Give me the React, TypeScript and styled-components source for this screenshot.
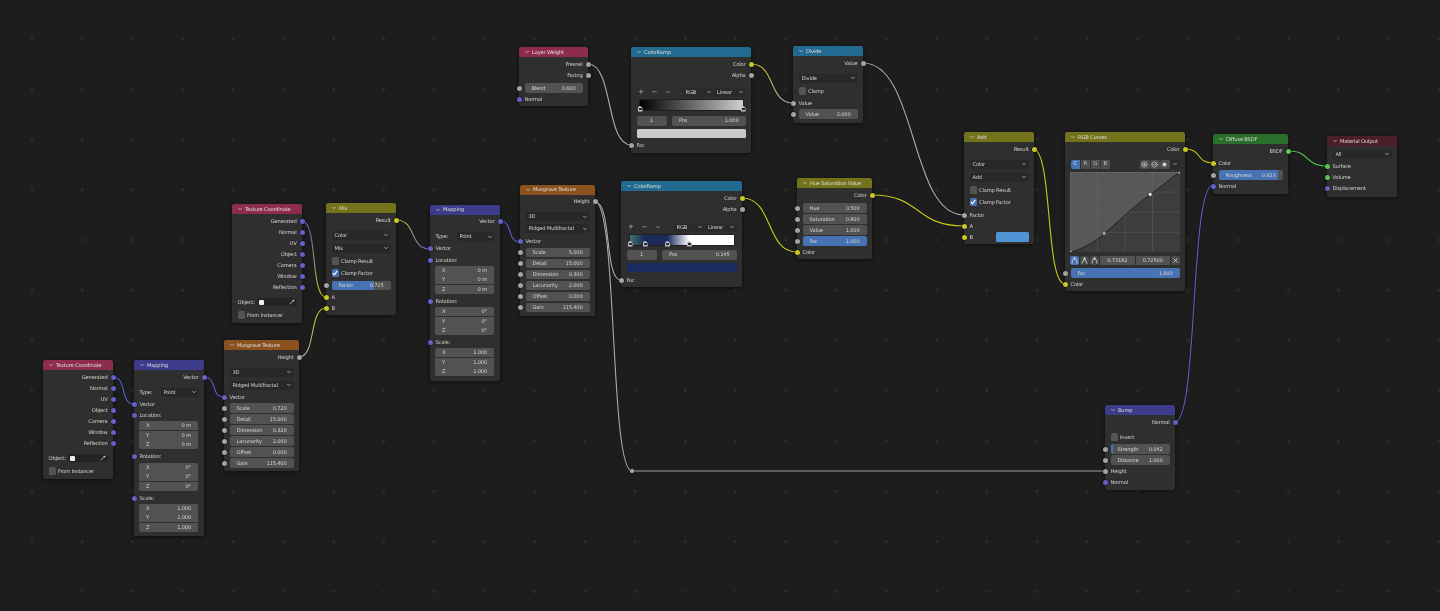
import React from "react";
import styled, { createGlobalStyle } from "styled-components";

type Kind = "gray" | "yellow" | "purple" | "green";
const KIND: Record<Kind, string> = { gray: "#a4a4a4", yellow: "#c7c729", purple: "#6363c7", green: "#5cc45c" };
const WIRE: Record<Kind, string> = { gray: "#a6a6a6", yellow: "#c4c420", purple: "#5c5cc0", green: "#50b450" };

const HEAD = { input: "#8e2c4f", vector: "#3c3c8a", texture: "#8b5220", color: "#73731c", converter: "#226a90", shader: "#2b6e2b", output: "#4b1e2a" };

const Global = createGlobalStyle`
  *, *::before, *::after { box-sizing: border-box; }
  html, body { margin: 0; padding: 0; background: #1d1d1d; }
  body { font-family: "DejaVu Sans", "Liberation Sans", sans-serif; text-rendering: geometricPrecision; }
`;

const Canvas = styled.main`
  position: relative;
  width: 1440px;
  height: 611px;
  overflow: hidden;
  background-color: #1d1d1d;
  background-image: radial-gradient(circle at center, #2e2e2e 0, #2e2e2e 1px, transparent 1.6px);
  background-size: 50.25px 50.25px;
  background-position: 6.9px 13.9px;
  filter: blur(0.4px);
`;

const WireLayer = styled.svg`
  position: absolute;
  inset: 0;
  width: 1440px;
  height: 611px;
`;

const NodeBox = styled.section<{ $x: number; $y: number; $w: number; $h: number }>`
  position: absolute;
  left: ${(p) => p.$x}px;
  top: ${(p) => p.$y}px;
  width: ${(p) => p.$w}px;
  height: ${(p) => p.$h}px;
  background: #2f2f2f;
  border-radius: 2.5px;
  box-shadow: 0 1px 4px rgba(0, 0, 0, 0.55);
  display: flex;
  flex-direction: column;
  font-size: 5.2px;
  letter-spacing: -0.2px;
  color: #d2d2d2;
`;

const Header = styled.header<{ $color: string }>`
  flex: none;
  height: 10px;
  margin-bottom: 1.5px;
  display: flex;
  align-items: center;
  gap: 3.5px;
  padding-left: 5.5px;
  background: ${(p) => p.$color};
  border-radius: 2.5px 2.5px 0 0;
  color: #dcdcdc;
  white-space: nowrap;
`;

const Label = styled.span`
  padding-top: 1.2px;
`;

const Row = styled.div<{ $mt?: number; $end?: boolean }>`
  position: relative;
  flex: none;
  height: 11px;
  margin-top: ${(p) => p.$mt ?? 0}px;
  padding: 0 5.5px;
  display: flex;
  align-items: center;
  justify-content: ${(p) => (p.$end ? "flex-end" : "flex-start")};
  white-space: nowrap;
`;

const Socket = styled.i<{ $kind: Kind; $right?: boolean }>`
  position: absolute;
  top: 3px;
  ${(p) => (p.$right ? "right: -2.5px;" : "left: -2.5px;")}
  width: 5px;
  height: 5px;
  border-radius: 50%;
  background: ${(p) => KIND[p.$kind]};
  box-shadow: 0 0 0 0.4px rgba(0, 0, 0, 0.6);
`;

const Field = styled.div<{ $fill?: number }>`
  flex: 1;
  height: 9.5px;
  padding: 0 7px;
  display: flex;
  align-items: center;
  justify-content: space-between;
  border-radius: 2px;
  background: ${(p) =>
    p.$fill
      ? `linear-gradient(to right, #4772b3 ${p.$fill}%, #525252 ${p.$fill}%)`
      : "#525252"};
  & > span { padding-top: 1.2px; }
`;

const Stack = styled.div`
  flex: none;
  margin: 0.25px 6px 0 5px;
  display: flex;
  flex-direction: column;
  gap: 0.5px;
`;

const StackField = styled(Field)`
  flex: none;
  height: 9px;
  border-radius: 0;
  &:first-child { border-radius: 2px 2px 0 0; }
  &:last-child { border-radius: 0 0 2px 2px; }
`;

const Drop = styled.div<{ $w?: number }>`
  flex: ${(p) => (p.$w ? "none" : "1")};
  width: ${(p) => (p.$w ? `${p.$w}px` : "auto")};
  height: 9px;
  padding: 0 2.5px 0 3px;
  display: flex;
  align-items: center;
  justify-content: space-between;
  background: #282828;
  border-radius: 2px;
  & > span { padding-top: 1.2px; }
`;

const TypeLabel = styled.span`
  flex: 1;
  padding-top: 1.2px;
`;

const Box = styled.span<{ $on?: boolean }>`
  flex: none;
  width: 7.5px;
  height: 7.5px;
  margin-right: 2px;
  border-radius: 1.5px;
  background: ${(p) => (p.$on ? "#4772b3" : "#545454")};
  display: flex;
  align-items: center;
  justify-content: center;
`;

const ObjectBox = styled.div`
  flex: 1;
  height: 8.5px;
  margin-left: 2.5px;
  padding: 0 2px;
  display: flex;
  align-items: center;
  justify-content: space-between;
  border-radius: 2px;
  background: #232323;
`;

const ObjectDot = styled.span`
  width: 5px;
  height: 5px;
  border-radius: 1px;
  background: #eee;
`;

const Swatch = styled.div<{ $color: string }>`
  flex: 1;
  height: 100%;
  background: ${(p) => p.$color};
  border-radius: 1.5px;
`;

const SwatchRow = styled.div<{ $mt?: number }>`
  flex: none;
  height: 9.5px;
  margin: ${(p) => p.$mt ?? 0}px 5.5px 0;
  display: flex;
`;

const RampBar = styled.div<{ $mt: number; $gradient: string }>`
  position: relative;
  flex: none;
  height: 9.5px;
  margin: ${(p) => p.$mt}px 8px 0 9px;
  background: ${(p) => p.$gradient};
  box-shadow: 0 0 0 0.5px #111;
`;

const Pin = styled.span<{ $at: number }>`
  position: absolute;
  bottom: -2px;
  left: calc(${(p) => p.$at}% - 2.5px);
  width: 5px;
  height: 6px;
  background: #c0c0c0;
  clip-path: polygon(50% 0, 100% 40%, 100% 100%, 0 100%, 0 40%);
  &::after {
    content: "";
    position: absolute;
    left: 1px;
    top: 2.4px;
    width: 3px;
    height: 2.6px;
    background: #2a2a2a;
  }
`;

const ToolRow = styled(Row)`
  padding: 0 5.5px 0 3px;
  gap: 0;
`;

const ToolIcon = styled.span`
  flex: none;
  width: 13.5px;
  display: flex;
  justify-content: center;
  color: #b8b8b8;
  font-size: 7px;
`;

const ToolGap = styled.span`
  flex: 1;
`;

const RampDrop = styled(Drop)`
  background: #2a2a2a;
  margin-left: 0.5px;
  padding-left: 3.5px;
`;

const PairRow = styled(Row)`
  gap: 5.5px;
  height: 9.5px;
`;

const IndexField = styled(Field)`
  flex: none;
  width: 30px;
  justify-content: center;
`;

const Tabs = styled.div`
  display: flex;
  gap: 0.5px;
`;

const Tab = styled.span<{ $on?: boolean }>`
  width: 9.5px;
  height: 9px;
  padding-top: 0.8px;
  display: flex;
  align-items: center;
  justify-content: center;
  background: ${(p) => (p.$on ? "#4772b3" : "#4e4e4e")};
  border-radius: ${(p) => (p.$on ? "2px 0 0 2px" : "0")};
  color: ${(p) => (p.$on ? "#eee" : "#c4c4c4")};
`;

const CurveIcons = styled.div`
  margin-left: auto;
  display: flex;
  align-items: center;
  gap: 0;
`;

const CurveIcon = styled.span<{ $dark?: boolean }>`
  width: 10px;
  height: 9px;
  display: flex;
  align-items: center;
  justify-content: center;
  background: ${(p) => (p.$dark ? "#2a2a2a" : "#4e4e4e")};
  border-radius: 2px;
  color: #d0d0d0;
`;

const Graph = styled.svg`
  flex: none;
  display: block;
  width: 110px;
  height: 80.5px;
  margin: 2.25px 5px 0;
`;

const CurveTools = styled(Row)`
  margin-top: 2.25px;
  padding: 0 5px;
  gap: 1px;
`;

const ToolBtn = styled.span<{ $on?: boolean }>`
  flex: none;
  width: 9px;
  height: 9px;
  display: flex;
  align-items: center;
  justify-content: center;
  border-radius: 2px;
  background: ${(p) => (p.$on ? "#4772b3" : "#4a4a4a")};
  color: #ddd;
`;

const CoordField = styled(Field)`
  flex: none;
  width: 34.5px;
  height: 9px;
  padding: 0;
  justify-content: center;
  border-radius: 0;
`;

const CloseBtn = styled(ToolBtn)`
  margin-left: auto;
`;

const SwatchBox = styled.span<{ $color: string }>`
  display: block;
  width: 33px;
  height: 9.5px;
  border-radius: 1.5px;
  background: ${(p) => p.$color};
`;

const Chevron = ({ s = 4 }: { s?: number }) => (
  <svg width={s} height={s} viewBox="0 0 8 8" fill="none" stroke="currentColor" strokeWidth="1.3" strokeLinecap="round" strokeLinejoin="round">
    <path d="M1 2.5 L4 5.5 L7 2.5" />
  </svg>
);

const Node = ({ title, color, x, y, w, h, children }: { title: string; color: string; x: number; y: number; w: number; h: number; children?: React.ReactNode }) => (
  <NodeBox $x={x} $y={y} $w={w} $h={h}>
    <Header $color={color}><Chevron /><Label>{title}</Label></Header>
    {children}
  </NodeBox>
);

const Out = ({ label, kind, mt }: { label: string; kind: Kind; mt?: number }) => (
  <Row $end $mt={mt}><Label>{label}</Label><Socket $kind={kind} $right /></Row>
);

const In = ({ label, kind, mt }: { label: string; kind: Kind; mt?: number }) => (
  <Row $mt={mt}><Socket $kind={kind} /><Label>{label}</Label></Row>
);

const Num = ({ label, value, mt, fill, socket = "gray" }: { label: string; value: string; mt?: number; fill?: number; socket?: Kind | null }) => (
  <Row $mt={mt}>
    {socket && <Socket $kind={socket} />}
    <Field $fill={fill}><span>{label}</span><span>{value}</span></Field>
  </Row>
);

const Pick = ({ label, mt }: { label: string; mt?: number }) => (
  <Row $mt={mt}><Drop><span>{label}</span><Chevron /></Drop></Row>
);

const Check = ({ label, on, mt }: { label: string; on?: boolean; mt?: number }) => (
  <Row $mt={mt}>
    <Box $on={on}>
      {on && (
        <svg width="6" height="6" viewBox="0 0 8 8" fill="none" stroke="#fff" strokeWidth="1.6" strokeLinecap="round" strokeLinejoin="round">
          <path d="M1.5 4.5 L3.3 6.3 L6.5 1.8" />
        </svg>
      )}
    </Box>
    <Label>{label}</Label>
  </Row>
);

const Vec = ({ values }: { values: string[] }) => (
  <Stack>
    {["X", "Y", "Z"].map((a, i) => (
      <StackField key={a}><span>{a}</span><span>{values[i]}</span></StackField>
    ))}
  </Stack>
);

const Pipette = () => (
  <svg width="6" height="6" viewBox="0 0 12 12" fill="#cfcfcf" stroke="#cfcfcf" strokeWidth="1">
    <path d="M9 1.5 L10.5 3 L8.5 5 L7 3.5 Z" />
    <path d="M7 4.5 L2 9.5 L1.5 10.5 L2.5 10 L7.5 5" fill="none" />
  </svg>
);

const TexCoord = ({ x, y }: { x: number; y: number }) => (
  <Node title="Texture Coordinate" color={HEAD.input} x={x} y={y} w={70} h={119}>
    {["Generated", "Normal", "UV", "Object", "Camera", "Window", "Reflection"].map((l) => (
      <Out key={l} label={l} kind="purple" />
    ))}
    <Row $mt={4}><Label>Object:</Label><ObjectBox><ObjectDot /><Pipette /></ObjectBox></Row>
    <Check label="From Instancer" mt={2} />
  </Node>
);

const Mapping = ({ x, y }: { x: number; y: number }) => (
  <Node title="Mapping" color={HEAD.vector} x={x} y={y} w={70} h={176}>
    <Out label="Vector" kind="purple" />
    <Row $mt={4}>
      <TypeLabel>Type:</TypeLabel>
      <Drop $w={38}><span>Point</span><Chevron /></Drop>
    </Row>
    <In label="Vector" kind="purple" mt={1} />
    <In label="Location:" kind="purple" mt={0.5} />
    <Vec values={["0 m", "0 m", "0 m"]} />
    <In label="Rotation:" kind="purple" mt={2} />
    <Vec values={["0°", "0°", "0°"]} />
    <In label="Scale:" kind="purple" mt={2} />
    <Vec values={["1.000", "1.000", "1.000"]} />
  </Node>
);

const Musgrave = ({ x, y, h, vals, m2, m3 }: { x: number; y: number; h: number; vals: string[]; m2: number; m3: number }) => (
  <Node title="Musgrave Texture" color={HEAD.texture} x={x} y={y} w={75} h={h}>
    <Out label="Height" kind="gray" />
    <Pick label="3D" mt={4} />
    <Pick label="Ridged Multifractal" mt={m2} />
    <In label="Vector" kind="purple" mt={m3} />
    {["Scale", "Detail", "Dimension", "Lacunarity", "Offset", "Gain"].map((l, i) => (
      <Num key={l} label={l} value={vals[i]} />
    ))}
  </Node>
);

const MixNode = ({ title, x, y, h, fac, swatch }: { title: string; x: number; y: number; h: number; fac?: number; swatch?: string }) => (
  <Node title={title} color={HEAD.color} x={x} y={y} w={70} h={h}>
    <Out label="Result" kind="yellow" />
    <Pick label="Color" mt={4} />
    <Pick label={title} mt={2} />
    <Check label="Clamp Result" mt={2} />
    <Check label="Clamp Factor" on mt={1} />
    {fac ? <Num label="Factor" value="0.725" fill={fac} mt={1.5} /> : <In label="Factor" kind="gray" mt={2} />}
    <In label="A" kind="yellow" mt={fac ? 0.5 : 0} />
    {swatch ? (
      <Row>
        <Socket $kind="yellow" /><Label>B</Label>
        <CurveIcons><SwatchBox $color={swatch} /></CurveIcons>
      </Row>
    ) : (
      <In label="B" kind="yellow" />
    )}
  </Node>
);

const RampTools = ({ mt }: { mt: number }) => (
  <ToolRow $mt={mt}>
    <ToolIcon>+</ToolIcon>
    <ToolIcon>−</ToolIcon>
    <ToolIcon><Chevron /></ToolIcon>
    <ToolGap />
    <RampDrop $w={31}><span>RGB</span><Chevron /></RampDrop>
    <RampDrop $w={32}><span>Linear</span><Chevron /></RampDrop>
  </ToolRow>
);

const Ramp = ({ x, y, w, h, gradient, pins, pos, swatch, m }: { x: number; y: number; w: number; h: number; gradient: string; pins: number[]; pos: string; swatch: string; m: number[] }) => (
  <Node title="ColorRamp" color={HEAD.converter} x={x} y={y} w={w} h={h}>
    <Out label="Color" kind="yellow" />
    <Out label="Alpha" kind="gray" />
    <RampTools mt={m[0]} />
    <RampBar $mt={m[1]} $gradient={gradient}>
      {pins.map((p) => <Pin key={p} $at={p} />)}
    </RampBar>
    <PairRow $mt={m[2]}>
      <IndexField><span>1</span></IndexField>
      <Field><span>Pos</span><span>{pos}</span></Field>
    </PairRow>
    <SwatchRow $mt={3}><Swatch $color={swatch} /></SwatchRow>
    <In label="Fac" kind="gray" mt={m[3]} />
  </Node>
);

const ZoomGlyph = ({ plus }: { plus?: boolean }) => (
  <svg width="7" height="7" viewBox="0 0 10 10" fill="none" stroke="currentColor" strokeWidth="1">
    <circle cx="5" cy="5" r="3.6" />
    <path d="M3 5 H7" />
    {plus && <path d="M5 3 V7" />}
    <path d="M0.5 5 H1.4 M8.6 5 H9.5" />
  </svg>
);

const HandleGlyph = ({ d }: { d: string }) => (
  <svg width="7" height="7" viewBox="0 0 10 10" fill="none" stroke="currentColor" strokeWidth="1.2" strokeLinecap="round">
    <path d={d} />
    <circle cx="5" cy="2" r="1" fill="currentColor" />
  </svg>
);

const Curves = () => (
  <Node title="RGB Curves" color={HEAD.color} x={1065} y={132} w={120} h={159}>
    <Out label="Color" kind="yellow" />
    <Row $mt={4}>
      <Tabs>
        <Tab $on>C</Tab><Tab>R</Tab><Tab>G</Tab><Tab>B</Tab>
      </Tabs>
      <CurveIcons>
        <CurveIcon><ZoomGlyph plus /></CurveIcon>
        <CurveIcon><ZoomGlyph /></CurveIcon>
        <CurveIcon>
          <svg width="5" height="5" viewBox="0 0 10 10" fill="currentColor"><circle cx="5" cy="5" r="4" /></svg>
        </CurveIcon>
        <CurveIcon $dark><Chevron /></CurveIcon>
      </CurveIcons>
    </Row>
    <Graph viewBox="0 0 110 80.5">
      <rect width="110" height="80.5" fill="#585858" />
      <path d="M0,80.5 C12,77 24,71 34.3,61.5 C48,50 65,33 80.3,22.5 C92,14 100,7 110,0 L110,80.5 Z" fill="#3d3d3d" />
      <path d="M27.5 0 V80.5 M55 0 V80.5 M82.5 0 V80.5 M0 20.1 H110 M0 40.25 H110 M0 60.4 H110" stroke="#6a6a6a" strokeOpacity="0.55" strokeWidth="0.6" />
      <path d="M0,80.5 C12,77 24,71 34.3,61.5 C48,50 65,33 80.3,22.5 C92,14 100,7 110,0" fill="none" stroke="#1d1d1d" strokeWidth="0.9" />
      <path d="M0 80.5 V0 H110" fill="none" stroke="#777" strokeWidth="0.8" />
      <rect x="33" y="60.2" width="2.4" height="2.4" fill="#b8b8b8" />
      <rect x="79" y="21.2" width="2.5" height="2.5" fill="#fff" />
      <rect x="108.5" y="0" width="1.5" height="1.5" fill="#ccc" />
      <rect x="0" y="79" width="1.5" height="1.5" fill="#ccc" />
    </Graph>
    <CurveTools>
      <ToolBtn $on><HandleGlyph d="M1.5 9 C2 4 3 2 5 2 C7 2 8 4 8.5 9" /></ToolBtn>
      <ToolBtn><HandleGlyph d="M1.5 9 L5 2 L8.5 9" /></ToolBtn>
      <ToolBtn><HandleGlyph d="M1.5 9 C2.5 4 3 3 5 2 C7 3 7.5 4 8.5 9" /></ToolBtn>
      <CoordField><span>0.73182</span></CoordField>
      <CoordField><span>0.72500</span></CoordField>
      <CloseBtn>
        <svg width="5" height="5" viewBox="0 0 8 8" stroke="currentColor" strokeWidth="1.4"><path d="M1 1 L7 7 M7 1 L1 7" /></svg>
      </CloseBtn>
    </CurveTools>
    <Num label="Fac" value="1.000" fill={100} mt={2} />
    <In label="Color" kind="yellow" />
  </Node>
);

type WireDef = [number, number, Kind, number, number, Kind];

const WIRES: WireDef[] = [
  [113, 377, "purple", 134, 404, "purple"],
  [204, 377, "purple", 224, 397, "purple"],
  [299, 357, "gray", 326, 308, "yellow"],
  [302, 221, "purple", 326, 297, "yellow"],
  [396, 220, "yellow", 430, 249, "purple"],
  [500, 221, "purple", 520, 242, "purple"],
  [595, 202, "gray", 621, 280, "gray"],
  [595, 202, "gray", 632, 471, "gray"],
  [632, 471, "gray", 1105, 471, "gray"],
  [588, 64, "gray", 631, 145, "gray"],
  [751, 64, "yellow", 793, 103, "gray"],
  [863, 63, "gray", 964, 215, "gray"],
  [742, 198, "yellow", 797, 252, "yellow"],
  [872, 195, "yellow", 964, 226, "yellow"],
  [1033, 149, "yellow", 1065, 284, "yellow"],
  [1185, 149, "yellow", 1213, 163, "yellow"],
  [1175, 422, "purple", 1213, 185, "purple"],
  [1288, 151, "green", 1327, 166, "green"],
];

const wirePath = ([x1, y1, , x2, y2]: WireDef) => {
  const h = Math.abs(x2 - x1) * 0.5 + 4;
  return `M${x1},${y1} C${x1 + h},${y1} ${x2 - h},${y2} ${x2},${y2}`;
};

const Wires = () => (
  <WireLayer viewBox="0 0 1440 611">
    <defs>
      {WIRES.map((w, i) => (
        <linearGradient key={i} id={`w${i}`} gradientUnits="userSpaceOnUse" x1={w[0]} y1={w[1]} x2={w[3]} y2={w[4] + 0.01}>
          <stop offset="0" stopColor={WIRE[w[2]]} />
          <stop offset="1" stopColor={WIRE[w[5]]} />
        </linearGradient>
      ))}
    </defs>
    {WIRES.map((w, i) => (
      <path key={`s${i}`} d={wirePath(w)} fill="none" stroke="#000" strokeOpacity="0.4" strokeWidth="2.2" />
    ))}
    {WIRES.map((w, i) => (
      <path key={`c${i}`} d={wirePath(w)} fill="none" stroke={`url(#w${i})`} strokeWidth="1.2" />
    ))}
    <circle cx="632" cy="471" r="2.2" fill="#a6a6a6" stroke="#111" strokeOpacity="0.6" strokeWidth="0.4" />
  </WireLayer>
);

export default function App() {
  return (
    <Canvas>
      <Global />
      <Wires />
      <TexCoord x={43} y={360} />
      <Mapping x={134} y={360} />
      <Musgrave x={224} y={340} h={131} m2={2} m3={1} vals={["0.720", "15.000", "0.320", "2.000", "0.000", "115.400"]} />
      <TexCoord x={232} y={204} />
      <MixNode title="Mix" x={326} y={203} h={112} fac={72} />
      <Mapping x={430} y={204.5} />
      <Musgrave x={520} y={184.5} h={131.5} m2={1} m3={2} vals={["5.000", "15.000", "0.300", "2.000", "0.000", "115.400"]} />

      <Node title="Layer Weight" color={HEAD.input} x={519} y={47} w={69} h={59}>
        <Out label="Fresnel" kind="gray" />
        <Out label="Facing" kind="gray" />
        <Num label="Blend" value="0.600" mt={2} />
        <In label="Normal" kind="purple" />
      </Node>

      <Ramp x={631} y={47} w={120} h={106} pos="1.000" swatch="#c9c9c9" m={[6, 2.5, 6.5, 2]}
        gradient="linear-gradient(to right, #000, #cfcfcf)" pins={[0, 100]} />
      <Ramp x={621} y={181} w={121} h={106} pos="0.145" swatch="#1c2c5e" m={[7, 2.5, 5.5, 3]}
        gradient="linear-gradient(to right, #44726a 0%, #1b2a5a 14.5%, #1b2a5a 36%, #ffffff 57%, #ffffff 100%)" pins={[0, 14.5, 36, 57]} />

      <Node title="Divide" color={HEAD.converter} x={793} y={46} w={70} h={77}>
        <Out label="Value" kind="gray" />
        <Pick label="Divide" mt={4} />
        <Check label="Clamp" mt={2} />
        <In label="Value" kind="gray" mt={1} />
        <Num label="Value" value="2.000" />
      </Node>

      <Node title="Hue Saturation Value" color={HEAD.color} x={797} y={178} w={75} h={81}>
        <Out label="Color" kind="yellow" />
        <Num label="Hue" value="0.500" mt={2} />
        <Num label="Saturation" value="0.800" />
        <Num label="Value" value="1.000" />
        <Num label="Fac" value="1.000" fill={100} />
        <In label="Color" kind="yellow" />
      </Node>

      <MixNode title="Add" x={964} y={132} h={112} swatch="#4f94d4" />
      <Curves />

      <Node title="Diffuse BSDF" color={HEAD.shader} x={1213} y={134} w={75} h={60}>
        <Out label="BSDF" kind="green" />
        <In label="Color" kind="yellow" mt={1} />
        <Num label="Roughness" value="0.923" fill={92} mt={1} />
        <In label="Normal" kind="purple" />
      </Node>

      <Node title="Material Output" color={HEAD.output} x={1327} y={136} w={70} h={61}>
        <Pick label="All" mt={1} />
        <In label="Surface" kind="green" mt={1} />
        <In label="Volume" kind="green" />
        <In label="Displacement" kind="purple" />
      </Node>

      <Node title="Bump" color={HEAD.vector} x={1105} y={405} w={70} h={85}>
        <Out label="Normal" kind="purple" />
        <Check label="Invert" mt={4} />
        <Num label="Strength" value="0.042" fill={4} mt={1} />
        <Num label="Distance" value="1.000" />
        <In label="Height" kind="gray" />
        <In label="Normal" kind="purple" mt={0.5} />
      </Node>
    </Canvas>
  );
}
